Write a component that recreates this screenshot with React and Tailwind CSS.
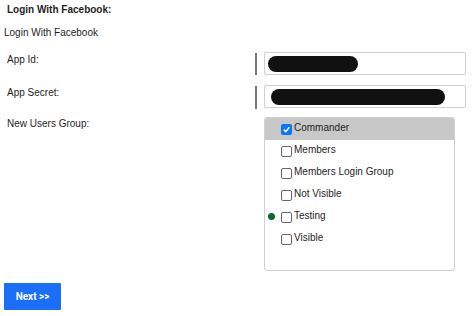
import React from 'react';

const groups = [
  { name: 'Commander', checked: true },
  { name: 'Members' },
  { name: 'Members Login Group' },
  { name: 'Not Visible' },
  { name: 'Testing', dot: true },
  { name: 'Visible' },
];

function Check({ checked }) {
  if (checked) {
    return (
      <span className="w-[11px] h-[11px] rounded-[2px] bg-[#0b75f5] flex items-center justify-center shrink-0">
        <svg width="9" height="9" viewBox="0 0 10 10">
          <path d="M2 5.2 L4.2 7.4 L8.2 2.6" stroke="white" strokeWidth="1.8" fill="none" />
        </svg>
      </span>
    );
  }
  return <span className="w-[11px] h-[11px] rounded-[2px] border border-[#666] bg-white shrink-0" />;
}

function Redacted({ width }) {
  return <div className="h-[16px] rounded-full bg-[#111]" style={{ width }} />;
}

export default function App() {
  return (
    <div className="w-[474px] h-[316px] bg-white text-[#1e1e1e] text-[10px] relative" style={{ fontFamily: '"Liberation Sans", Arial, sans-serif' }}>
      <div className="pl-[7px] pt-[3px] font-bold leading-[14px]">Login With Facebook:</div>
      <div className="pl-[4px] mt-[9px] leading-[14px]">Login With Facebook</div>

      <div className="flex mt-[12px] h-[23px]">
        <div className="w-[255px] pl-[7px] pt-[1px] leading-[14px]">App Id:</div>
        <div className="w-[2px] h-[22px] bg-[#777] mt-[1px]" />
        <div className="ml-[7px] w-[202px] h-[23px] border border-[#d0d0d0] rounded-[2px] flex items-center pl-[3px]">
          <Redacted width={90} />
        </div>
      </div>

      <div className="flex mt-[10px] h-[23px]">
        <div className="w-[255px] pl-[7px] pt-[1px] leading-[14px]">App Secret:</div>
        <div className="w-[2px] h-[23px] bg-[#777] mt-[1px]" />
        <div className="ml-[7px] w-[202px] h-[23px] border border-[#d0d0d0] rounded-[2px] flex items-center pl-[6px]">
          <Redacted width={174} />
        </div>
      </div>

      <div className="flex mt-[9px]">
        <div className="w-[264px] pl-[7px] leading-[14px]">New Users Group:</div>
        <div className="w-[191px] h-[154px] border border-[#d0d0d0] rounded-[3px] overflow-hidden">
          {groups.map((g) => (
            <div key={g.name} className={`relative h-[22px] flex items-center gap-[2px] pl-[16px] ${g.checked ? 'bg-[#c8c8c8]' : ''}`}>
              {g.dot && <span className="absolute left-[3px] top-[7px] w-[7px] h-[7px] rounded-full bg-[#0a6a32]" />}
              <Check checked={g.checked} />
              <span className="leading-[14px] -mt-[3px]">{g.name}</span>
            </div>
          ))}
        </div>
      </div>

      <button className="absolute left-[4px] top-[283px] w-[57px] h-[27px] bg-[#1b6ef7] text-white font-bold text-[10px] rounded-[1px]" style={{ fontFamily: 'Roboto, Arial, sans-serif' }}>
        Next &gt;&gt;
      </button>
    </div>
  );
}
